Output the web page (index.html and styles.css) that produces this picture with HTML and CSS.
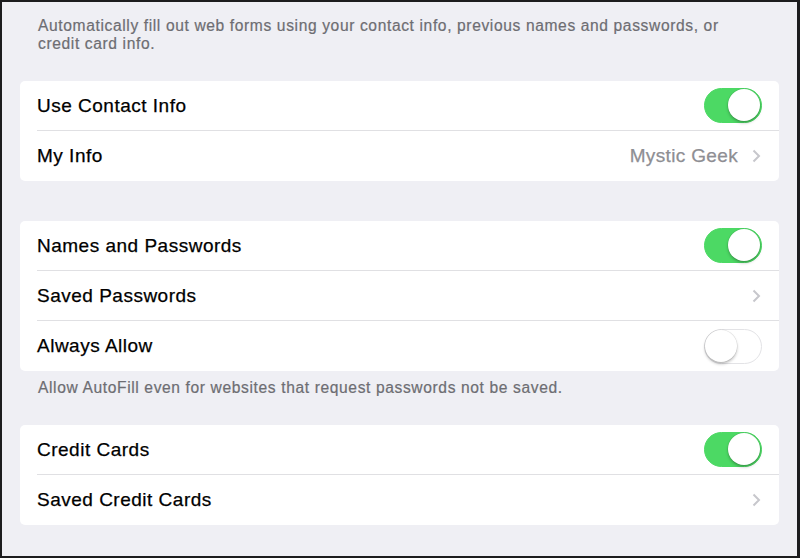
FILE: index.html
```html
<!DOCTYPE html>
<html>
<head>
<meta charset="utf-8">
<link rel="stylesheet" href="styles.css">
</head>
<body>
<div class="screen">
  <p class="note note-top">Automatically fill out web forms using your contact info, previous names and passwords, or credit card info.</p>

  <div class="group">
    <div class="row">
      <span class="label">Use Contact Info</span>
      <span class="toggle on"><span class="knob"></span></span>
    </div>
    <div class="row">
      <span class="label">My Info</span>
      <span class="detail">Mystic Geek</span>
      <svg class="chev" width="9" height="14" viewBox="0 0 9 14"><path d="M1.5 1.5 L7 7 L1.5 12.5" fill="none" stroke="#c7c7cc" stroke-width="2"/></svg>
    </div>
  </div>

  <div class="group group-gap">
    <div class="row">
      <span class="label">Names and Passwords</span>
      <span class="toggle on"><span class="knob"></span></span>
    </div>
    <div class="row">
      <span class="label">Saved Passwords</span>
      <svg class="chev" width="9" height="14" viewBox="0 0 9 14"><path d="M1.5 1.5 L7 7 L1.5 12.5" fill="none" stroke="#c7c7cc" stroke-width="2"/></svg>
    </div>
    <div class="row">
      <span class="label">Always Allow</span>
      <span class="toggle"><span class="knob"></span></span>
    </div>
  </div>
  <p class="note note-foot">Allow AutoFill even for websites that request passwords not be saved.</p>

  <div class="group">
    <div class="row">
      <span class="label">Credit Cards</span>
      <span class="toggle on"><span class="knob"></span></span>
    </div>
    <div class="row">
      <span class="label">Saved Credit Cards</span>
      <svg class="chev" width="9" height="14" viewBox="0 0 9 14"><path d="M1.5 1.5 L7 7 L1.5 12.5" fill="none" stroke="#c7c7cc" stroke-width="2"/></svg>
    </div>
  </div>
</div>
</body>
</html>
```

FILE: styles.css
```css
html, body {
  margin: 0;
  padding: 0;
}
body {
  font-family: "Liberation Sans", Arial, sans-serif;
  background: #efeff4;
}
.screen {
  box-sizing: border-box;
  width: 800px;
  height: 558px;
  border: 2px solid #1c1c1e;
  border-right-width: 3px;
  background: #efeff4;
  padding: 0 18px 0 18px;
  overflow: hidden;
}
.note {
  margin: 0;
  color: #6d6d72;
  font-size: 15.6px;
  line-height: 18px;
  letter-spacing: 0.62px;
  padding: 0 56px 0 18px;
  -webkit-text-stroke: 0.2px #6d6d72;
}
.note-top {
  padding-top: 15px;
  padding-bottom: 28px;
}
.note-foot {
  padding-top: 8px;
  padding-bottom: 28px;
}
.group {
  background: #fff;
  border-radius: 5px;
  padding-left: 17px;
}
.group-gap {
  margin-top: 40px;
}
.row {
  height: 50px;
  display: flex;
  align-items: center;
  padding-right: 17px;
  border-bottom: 1px solid #e0e0e3;
  box-sizing: border-box;
}
.row:last-child {
  border-bottom: none;
  height: 50px;
}
.label {
  flex: 1;
  font-size: 19px;
  letter-spacing: 0.5px;
  color: #000;
  -webkit-text-stroke: 0.25px #000;
}
.detail {
  font-size: 19px;
  letter-spacing: 0.35px;
  color: #8e8e93;
  margin-right: 14px;
  -webkit-text-stroke: 0.25px #8e8e93;
}
.chev {
  display: block;
  margin-right: 1px;
}
.toggle {
  position: relative;
  width: 58px;
  height: 35px;
  border-radius: 18px;
  box-sizing: border-box;
  border: 1.5px solid #e3e3e6;
  background: #fff;
}
.toggle.on {
  background: #4cd964;
  border-color: #4cd964;
}
.knob {
  position: absolute;
  top: 0;
  left: 0;
  width: 32px;
  height: 32px;
  border-radius: 50%;
  background: #fff;
  box-shadow: 0 2px 3px rgba(0,0,0,0.25), 0 0 0 0.5px rgba(0,0,0,0.1);
}
.toggle.on .knob {
  left: 23px;
}
```
